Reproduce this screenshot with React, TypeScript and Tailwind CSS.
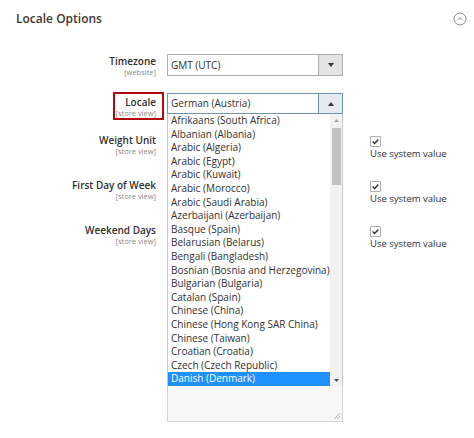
import React from "react";

const locales = [
  "Afrikaans (South Africa)",
  "Albanian (Albania)",
  "Arabic (Algeria)",
  "Arabic (Egypt)",
  "Arabic (Kuwait)",
  "Arabic (Morocco)",
  "Arabic (Saudi Arabia)",
  "Azerbaijani (Azerbaijan)",
  "Basque (Spain)",
  "Belarusian (Belarus)",
  "Bengali (Bangladesh)",
  "Bosnian (Bosnia and Herzegovina)",
  "Bulgarian (Bulgaria)",
  "Catalan (Spain)",
  "Chinese (China)",
  "Chinese (Hong Kong SAR China)",
  "Chinese (Taiwan)",
  "Croatian (Croatia)",
  "Czech (Czech Republic)",
  "Danish (Denmark)",
];

function Check() {
  return (
    <div className="w-[11px] h-[11px] border border-[#adadad] rounded-[1px] bg-white flex items-center justify-center">
      <svg width="9" height="9" viewBox="0 0 9 9">
        <path d="M1.6 4.6 L3.6 6.5 L7.4 2.4" fill="none" stroke="#303030" strokeWidth="1.4" />
      </svg>
    </div>
  );
}

function CheckRow({ label }: { label: string }) {
  return (
    <div className="grid grid-cols-[164px_179px_1fr] h-[45px]">
      <div className="pr-[8px] text-right">
        <div className="text-[10px] leading-[11px] font-semibold text-[#303030]">{label}</div>
        <div className="text-[7.5px] leading-[9px] mt-[1px] text-[#8a8a8a]">[store view]</div>
      </div>
      <div />
      <div className="pl-[27px] pt-[1px] flex flex-col items-start">
        <Check />
        <div className="text-[9.5px] leading-[12px] text-[#303030] mt-[1px]">Use system value</div>
      </div>
    </div>
  );
}

export default function App() {
  return (
    <div className="w-[474px] h-[438px] bg-white relative overflow-hidden font-['Open_Sans',sans-serif]">
      <div className="flex items-center justify-between pl-[16px] pr-[7px] h-[38px]">
        <div className="text-[12px] font-semibold text-[#41362f]">Locale Options</div>
        <svg width="14" height="14" viewBox="0 0 14 14">
          <circle cx="7" cy="7" r="6" fill="none" stroke="#8a8a8a" strokeWidth="1" />
          <path d="M4.6 8.1 L7 5.7 L9.4 8.1" fill="none" stroke="#8a8a8a" strokeWidth="1" />
        </svg>
      </div>

      {/* Timezone */}
      <div className="grid grid-cols-[164px_179px_1fr] mt-[16px]">
        <div className="pr-[8px] text-right pt-[2px]">
          <div className="text-[10px] leading-[11px] font-semibold text-[#303030]">Timezone</div>
          <div className="text-[7.5px] leading-[9px] mt-[1px] text-[#8a8a8a]">[website]</div>
        </div>
        <div className="ml-[3px] h-[22px] border border-[#adadad] bg-white flex">
          <div className="flex-1 pl-[3px] text-[10px] leading-[20px] text-[#303030]">GMT (UTC)</div>
          <div className="w-[24px] bg-[#e3e3e3] border-l border-[#adadad] flex items-center justify-center">
            <svg width="6" height="4" viewBox="0 0 6 4">
              <path d="M0 0 L6 0 L3 4 Z" fill="#333" />
            </svg>
          </div>
        </div>
        <div />
      </div>

      {/* Locale */}
      <div className="grid grid-cols-[164px_179px_1fr] mt-[15px] relative">
        <div className="flex justify-end">
          <div className="w-[51px] h-[28px] border-2 border-[#b00a0a] pr-[6px] text-right">
            <div className="text-[10px] leading-[11px] font-semibold text-[#303030] mt-[3px]">Locale</div>
            <div className="text-[7.5px] leading-[9px] mt-[1px] text-[#8a8a8a] whitespace-nowrap">[store view]</div>
          </div>
        </div>
        <div className="ml-[3px] relative">
          <div className="mt-[1px] h-[21px] border border-[#6f95b0] bg-white flex">
            <div className="flex-1 pl-[3px] text-[10px] leading-[19px] text-[#303030]">German (Austria)</div>
            <div className="w-[24px] bg-[#e3ebf0] border-l border-[#6f95b0] flex items-center justify-center">
              <svg width="6" height="4" viewBox="0 0 6 4">
                <path d="M0 4 L6 4 L3 0 Z" fill="#333" />
              </svg>
            </div>
          </div>
          {/* Dropdown list overlay */}
          <div className="absolute left-0 top-[22px] w-[176px] z-10">
            <div className="relative h-[272px] bg-white border-l border-r border-[#c8c8c8] overflow-hidden">
              <div className="pr-[12px]">
                {locales.map((l, i) => (
                  <div
                    key={l}
                    className={
                      i === locales.length - 1
                        ? "h-[13.6px] leading-[13.6px] pl-[3px] text-[10px] whitespace-nowrap bg-[#1e90ff] text-white"
                        : "h-[13.6px] leading-[13.6px] pl-[3px] text-[10px] whitespace-nowrap text-[#303030]"
                    }
                  >
                    {l}
                  </div>
                ))}
              </div>
              <div className="absolute right-0 top-0 w-[12px] h-full bg-[#f1f1f1] flex flex-col items-center">
                <div className="h-[12px] flex items-center justify-center">
                  <svg width="5" height="3" viewBox="0 0 5 3">
                    <path d="M0 3 L5 3 L2.5 0 Z" fill="#a3a3a3" />
                  </svg>
                </div>
                <div className="w-[9px] h-[57px] mt-[2px] bg-[#c1c1c1]" />
                <div className="flex-1" />
                <div className="h-[12px] flex items-center justify-center">
                  <svg width="5" height="3" viewBox="0 0 5 3">
                    <path d="M0 0 L5 0 L2.5 3 Z" fill="#505050" />
                  </svg>
                </div>
              </div>
            </div>
            <div className="relative h-[36px] bg-[#f7f7f7] border-l border-r border-b border-[#d4d4d4]">
              <svg className="absolute right-[1px] bottom-[1px]" width="8" height="8" viewBox="0 0 8 8">
                <path d="M7 1 L1 7 M7 4 L4 7" stroke="#b5b5b5" strokeWidth="1" />
              </svg>
            </div>
          </div>
        </div>
        <div />
      </div>

      <div className="mt-[15px]">
        <CheckRow label="Weight Unit" />
        <CheckRow label="First Day of Week" />
        <CheckRow label="Weekend Days" />
      </div>
    </div>
  );
}
